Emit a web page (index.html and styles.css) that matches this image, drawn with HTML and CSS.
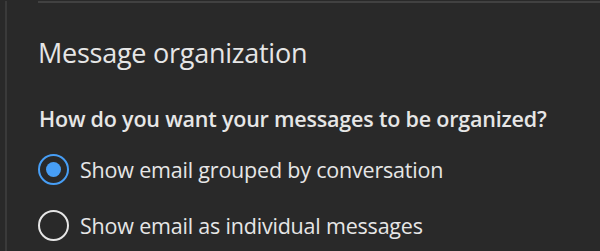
FILE: index.html
```html
<!DOCTYPE html>
<html>
<head>
<meta charset="utf-8">
<link rel="stylesheet" href="styles.css">
</head>
<body>
<div class="panel">
  <div class="divider"></div>
  <h2 class="title">Message organization</h2>
  <p class="question">How do you want your messages to be organized?</p>
  <div class="options">
    <label class="option">
      <span class="radio checked"><span class="dot"></span></span>
      <span class="label">Show email grouped by conversation</span>
    </label>
    <label class="option">
      <span class="radio"></span>
      <span class="label">Show email as individual messages</span>
    </label>
  </div>
</div>
</body>
</html>
```
FILE: styles.css
```css
html, body {
  margin: 0;
  padding: 0;
  background: #292929;
  height: 100%;
  overflow: hidden;
}
body {
  font-family: "Open Sans", "Noto Sans", sans-serif;
  color: #e6e6e6;
}
.panel {
  margin-left: 5px;
  border-left: 2px solid #3a3a3a;
  height: 251px;
  padding-left: 31px;
  box-sizing: border-box;
}
.divider {
  height: 2px;
  background: #414141;
  margin-top: 1px;
}
.title {
  margin: 32px 0 0 0;
  font-size: 27px;
  font-weight: 450;
  line-height: 36px;
  letter-spacing: -0.25px;
}
.question {
  margin: 34px 0 0 1px;
  font-size: 21.5px;
  font-weight: 600;
  line-height: 28px;
  letter-spacing: -0.2px;
}
.options {
  display: flex;
  flex-direction: column;
  gap: 25px;
  margin-top: 21px;
}
.option {
  display: flex;
  align-items: center;
  gap: 11px;
}
.radio {
  width: 31px;
  height: 31px;
  box-sizing: border-box;
  border: 2px solid #e6e6e6;
  border-radius: 50%;
  display: flex;
  align-items: center;
  justify-content: center;
  flex: none;
}
.radio.checked {
  border-color: #479ef5;
}
.dot {
  width: 15px;
  height: 15px;
  border-radius: 50%;
  background: #479ef5;
}
.label {
  font-size: 21.5px;
  line-height: 28px;
  letter-spacing: -0.2px;
}
```
